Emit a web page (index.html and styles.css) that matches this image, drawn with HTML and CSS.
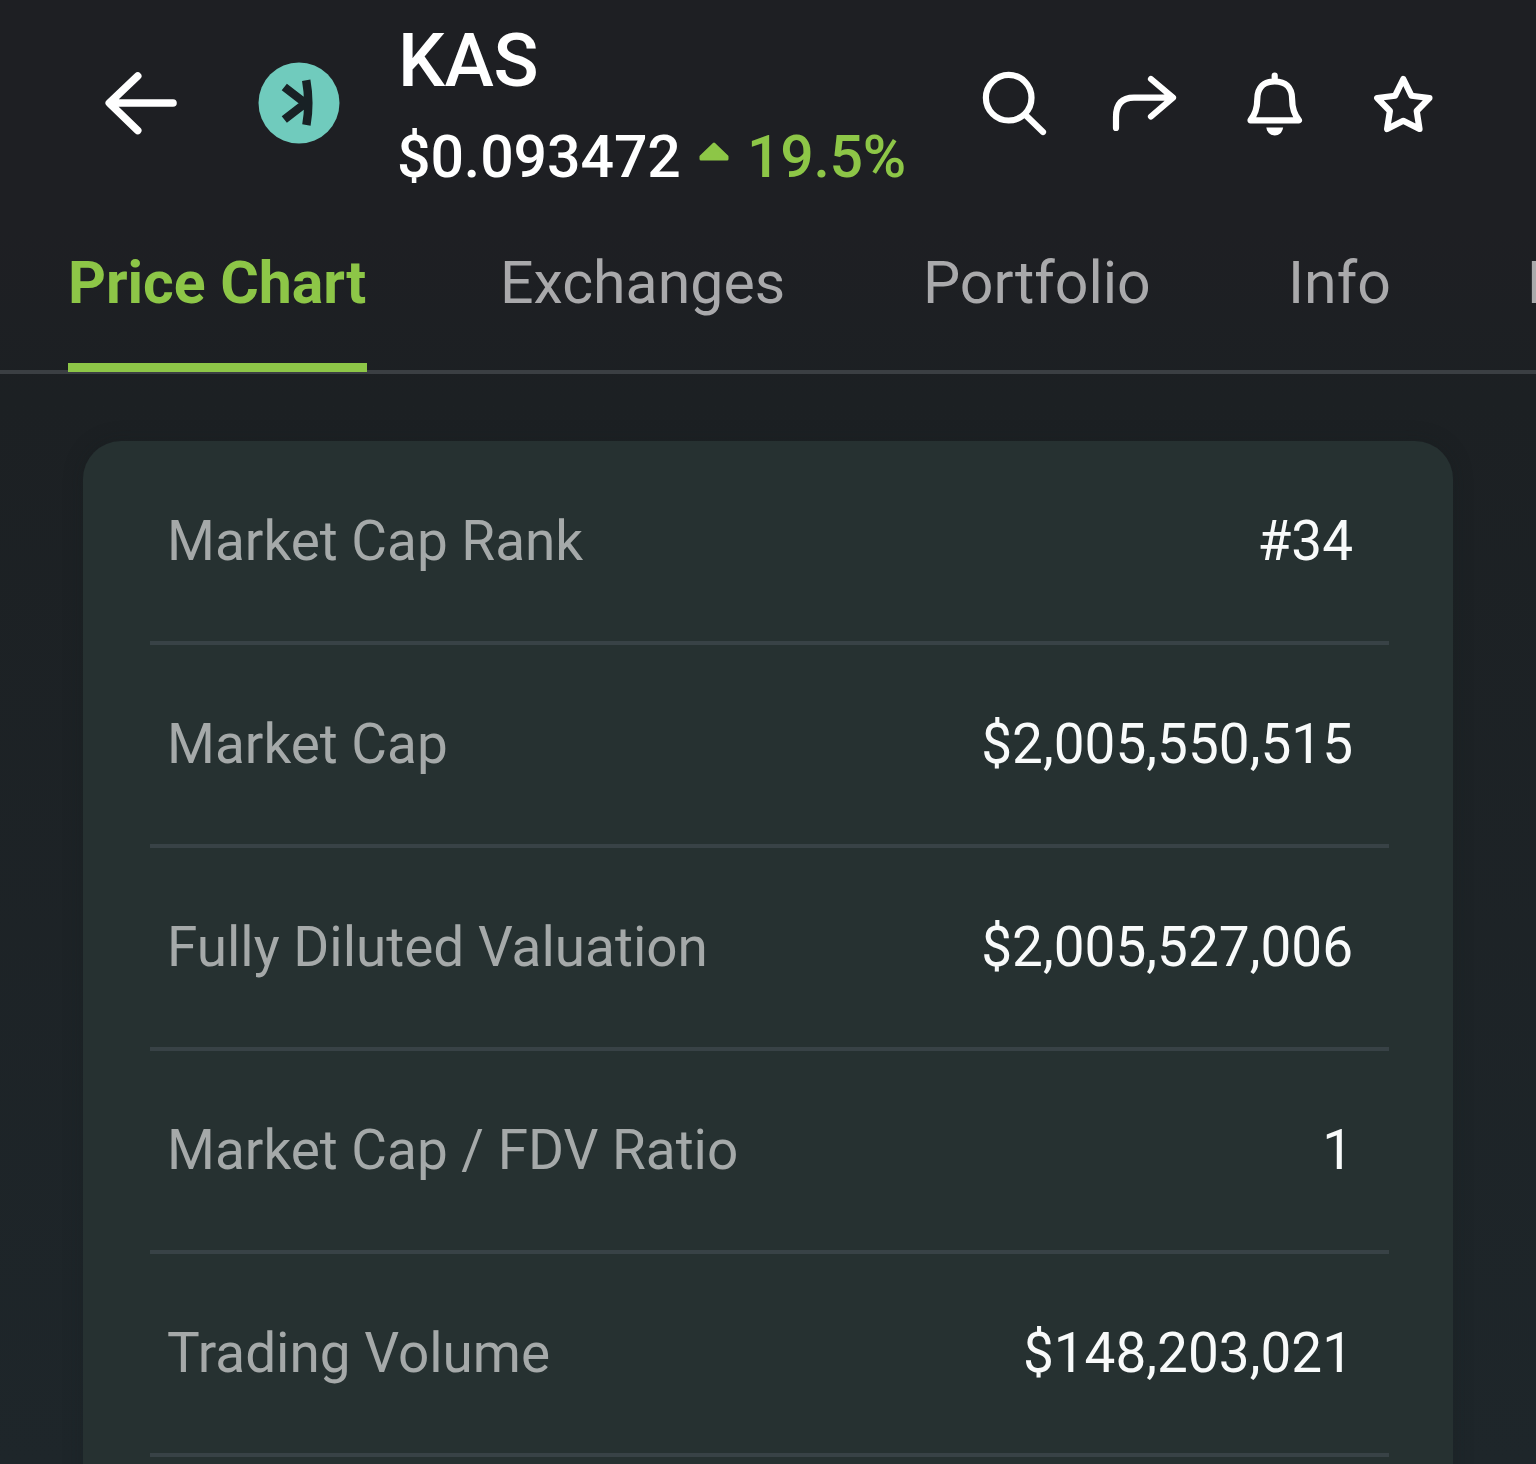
FILE: index.html
```html
<!DOCTYPE html>
<html lang="en">
<head>
<meta charset="utf-8">
<title>KAS</title>
<link rel="stylesheet" href="styles.css">
</head>
<body>
<header class="header">
  <svg class="back" viewBox="0 0 80 70" width="80" height="70" aria-label="Back"><path d="M37.700 8L9.300 35L37.700 62.500M10 35H73"/></svg>
  <svg class="coin" viewBox="0 0 82 82" width="82" height="82"><circle cx="41" cy="41" r="40.500"/><path d="M48.200 18.200Q52.300 41 48.400 63M26.300 25L49 42.500M49 40L26.300 57.500"/></svg>
  <div class="title">
    <h1 class="symbol">KAS</h1>
    <div class="quote">
      <span class="price">$0.093472</span>
      <svg class="caret" viewBox="0 0 30 20" width="30" height="20"><path d="M15 2L28 14.500V17H2V14.500Z"/></svg>
      <span class="change">19.5%</span>
    </div>
  </div>
  <nav class="actions">
    <svg viewBox="0 0 70 70" width="70" height="70" aria-label="Search"><circle cx="28.700" cy="29.700" r="22.800"/><path d="M45.500 47L63 64"/></svg>
    <svg viewBox="0 0 70 70" width="70" height="70" aria-label="Share"><path d="M6 60V49Q6 29.700 24 29.700H62M41 11L63 29.700L41 48.500"/></svg>
    <svg viewBox="0 0 60 70" width="60" height="70" aria-label="Alerts"><path d="M29.700 7.500V12M5.500 52.300C10.500 46 12.300 40 12.300 31C12.300 19 19 13.500 29.700 13.500C40.400 13.500 47.100 19 47.100 31C47.100 40 48.900 46 53.900 52.300Z"/><path class="clapper" d="M21.300 59.500H38.100C37.300 64.500 34 67.500 29.700 67.500S22.100 64.500 21.300 59.500Z"/></svg>
    <svg viewBox="0 0 70 70" width="70" height="70" aria-label="Favorite"><path class="star" d="M33.300 11L41.400 27.700L59.400 30L46.700 43L49.500 61L33.300 52.800L17.100 61L19.900 43L7.200 30L25.200 27.700Z"/></svg>
  </nav>
</header>
<nav class="tabs">
  <a class="tab active">Price Chart</a>
  <a class="tab exchanges">Exchanges</a>
  <a class="tab portfolio">Portfolio</a>
  <a class="tab info">Info</a>
  <a class="tab">News</a>
</nav>
<main class="content">
  <dl class="card">
    <div class="row"><dt>Market Cap Rank</dt><dd>#34</dd></div>
    <div class="row"><dt>Market Cap</dt><dd>$2,005,550,515</dd></div>
    <div class="row"><dt>Fully Diluted Valuation</dt><dd>$2,005,527,006</dd></div>
    <div class="row"><dt>Market Cap / FDV Ratio</dt><dd>1</dd></div>
    <div class="row"><dt>Trading Volume</dt><dd>$148,203,021</dd></div>
  </dl>
</main>
</body>
</html>
```
FILE: styles.css
```css
* { box-sizing: border-box; }
body {
  margin: 0;
  width: 1536px;
  height: 1464px;
  overflow: hidden;
  font-family: Roboto, "Liberation Sans", sans-serif;
  color: #fff;
  background: linear-gradient(#1e1f23 0, #1e1f23 230px, #1c2023 400px, #1e262a 1464px);
}
svg { display: block; flex: none; fill: none; stroke-linecap: round; stroke-linejoin: round; }
.header { display: flex; height: 220px; padding-left: 100px; }
.back { margin-top: 68px; stroke: #fff; stroke-width: 7.6; }
.coin { margin: 62px 0 0 78px; }
.coin circle { fill: #70cbbd; }
.coin path { stroke: #182125; stroke-width: 8.5; stroke-linecap: butt; stroke-linejoin: miter; }
.title { width: 580px; margin-left: 58px; padding-top: 17px; }
.symbol { margin: 0; font-size: 74.4px; font-weight: 500; line-height: 88px; letter-spacing: -.4px; }
.quote { display: flex; align-items: center; height: 104px; line-height: 104px; font-size: 59px; font-weight: 500; white-space: nowrap; }
.price { width: 301px; margin-left: -1px; margin-right: 1px; letter-spacing: -.1px; }
.caret { margin-top: -10px; fill: #8dc647; stroke: #8dc647; stroke-width: 3; }
.change { margin-left: 18px; color: #8dc647; letter-spacing: -.3px; }
.actions { display: flex; margin: 68px 0 0 2px; stroke: #fff; stroke-width: 6.2; }
.actions svg:nth-child(2) { margin-left: 60px; }
.actions svg:nth-child(3) { margin-left: 65px; }
.actions svg:nth-child(4) { margin-left: 65px; }
.clapper { fill: #fff; stroke: none; }
.tabs { display: flex; height: 154px; padding-left: 68px; border-bottom: 4px solid #3b3f43; font-size: 59px; line-height: 126px; color: #a9a9ab; white-space: nowrap; overflow-x: clip; }
.tab { flex: none; height: 152px; }
.active { width: 299px; border-bottom: 9px solid #8dc647; color: #8dc647; font-weight: 700; letter-spacing: -.05px; }
.exchanges { width: 423px; margin-left: 133px; }
.portfolio { width: 365px; }
.info { width: 239px; }
.content { padding: 67px 83px 0; }
.card { width: 1370px; height: 1080px; margin: 0; padding: 1px 64px 0 67px; border-radius: 38px; background: #263131; box-shadow: 0 0 20px rgba(20, 26, 29, .25); }
.row { display: flex; justify-content: space-between; align-items: center; height: 203px; padding: 0 36px 2px 17px; border-bottom: 4px solid #384246; font-size: 54.9px; white-space: nowrap; }
.row dt { color: #a5a9a9; }
.row dd { margin: 0; color: #f8fafa; }
```
